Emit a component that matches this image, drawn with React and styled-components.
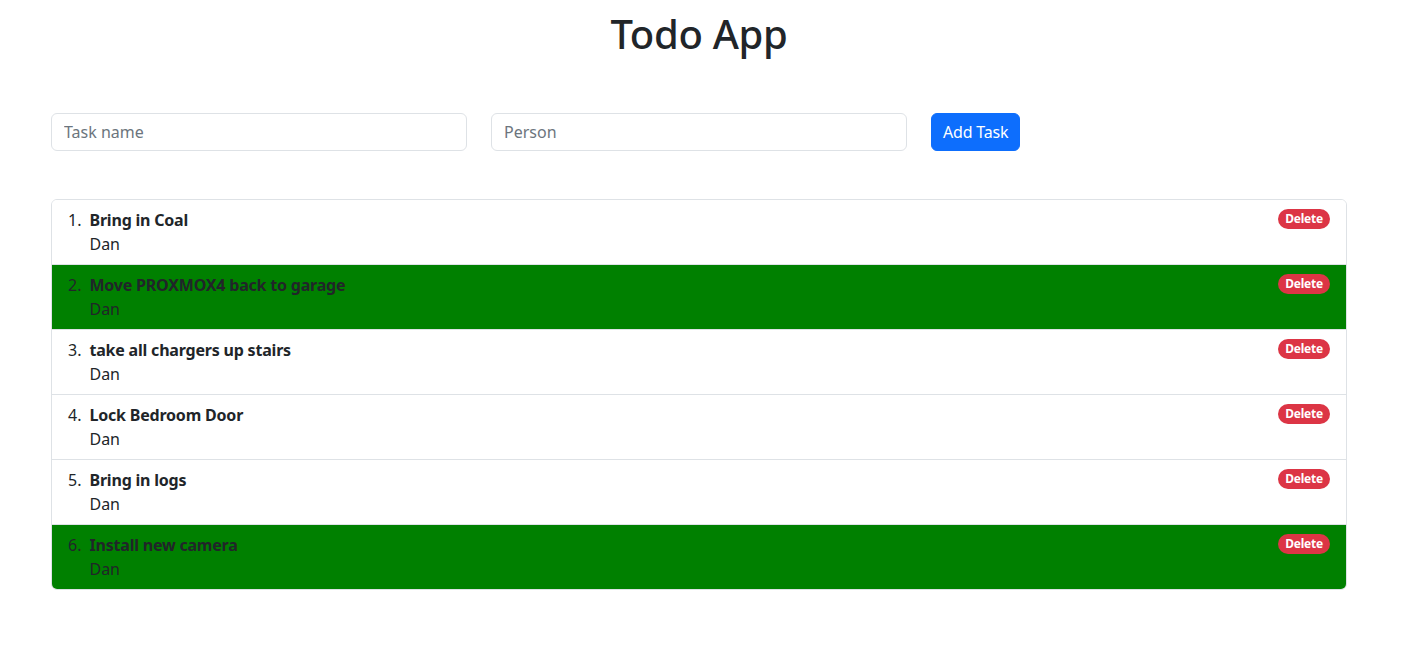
import React from "react";
import styled, { createGlobalStyle } from "styled-components";

const Global = createGlobalStyle`
  * { box-sizing: border-box; }
  body {
    margin: 0;
    font-family: "Noto Sans", "Open Sans", sans-serif;
    font-size: 16px;
    line-height: 1.5;
    color: #212529;
    background: #fff;
  }
`;

const Container = styled.div`
  width: 1296px;
  margin: 0 0 0 51px;
  padding-top: 10px;
`;

const Title = styled.h1`
  margin: 0;
  font-size: 40px;
  font-weight: 500;
  line-height: 48px;
  text-align: center;
  letter-spacing: -0.3px;
`;

const FormRow = styled.form`
  display: grid;
  grid-template-columns: 416px 416px auto;
  column-gap: 24px;
  justify-content: start;
  margin-top: 55px;
`;

const Input = styled.input`
  display: block;
  width: 100%;
  height: 38px;
  padding: 6px 12px;
  font: inherit;
  font-size: 16px;
  color: #212529;
  border: 1px solid #dee2e6;
  border-radius: 6px;
  outline: none;
  &::placeholder { color: #6c757d; }
`;

const Button = styled.button`
  height: 38px;
  padding: 6px 11px;
  font: inherit;
  font-size: 16px;
  letter-spacing: -0.2px;
  color: #fff;
  background: #0d6efd;
  border: 1px solid #0d6efd;
  border-radius: 6px;
  justify-self: start;
`;

const List = styled.ol`
  list-style: none;
  margin: 48px 0 0;
  padding: 0;
  border: 1px solid #dee2e6;
  border-radius: 6px;
  overflow: hidden;
  counter-reset: section;
`;

const Item = styled.li`
  display: flex;
  align-items: flex-start;
  justify-content: space-between;
  padding: 8px 16px;
  background: ${(p) => (p.$done ? "#008000" : "#fff")};
  color: #212529;
  counter-increment: section;
  & + & { border-top: 1px solid #dee2e6; }
  &::before { content: counter(section) "."; }
`;

const Body = styled.div`
  margin-left: 8px;
  margin-right: auto;
`;

const TaskName = styled.div`
  font-weight: 700;
  letter-spacing: -0.2px;
`;

const Badge = styled.span`
  display: inline-block;
  margin-top: 1px;
  padding: 4px 7px;
  font-size: 12px;
  font-weight: 700;
  line-height: 1;
  letter-spacing: -0.2px;
  color: #fff;
  background: #dc3545;
  border-radius: 50rem;
`;

const tasks = [
  { name: "Bring in Coal", person: "Dan", done: false },
  { name: "Move PROXMOX4 back to garage", person: "Dan", done: true },
  { name: "take all chargers up stairs", person: "Dan", done: false },
  { name: "Lock Bedroom Door", person: "Dan", done: false },
  { name: "Bring in logs", person: "Dan", done: false },
  { name: "Install new camera", person: "Dan", done: true },
];

export default function App() {
  return (
    <>
      <Global />
      <Container>
        <Title>Todo App</Title>
        <FormRow onSubmit={(e) => e.preventDefault()}>
          <Input placeholder="Task name" />
          <Input placeholder="Person" />
          <Button type="submit">Add Task</Button>
        </FormRow>
        <List>
          {tasks.map((t, i) => (
            <Item key={i} $done={t.done}>
              <Body>
                <TaskName>{t.name}</TaskName>
                {t.person}
              </Body>
              <Badge>Delete</Badge>
            </Item>
          ))}
        </List>
      </Container>
    </>
  );
}
